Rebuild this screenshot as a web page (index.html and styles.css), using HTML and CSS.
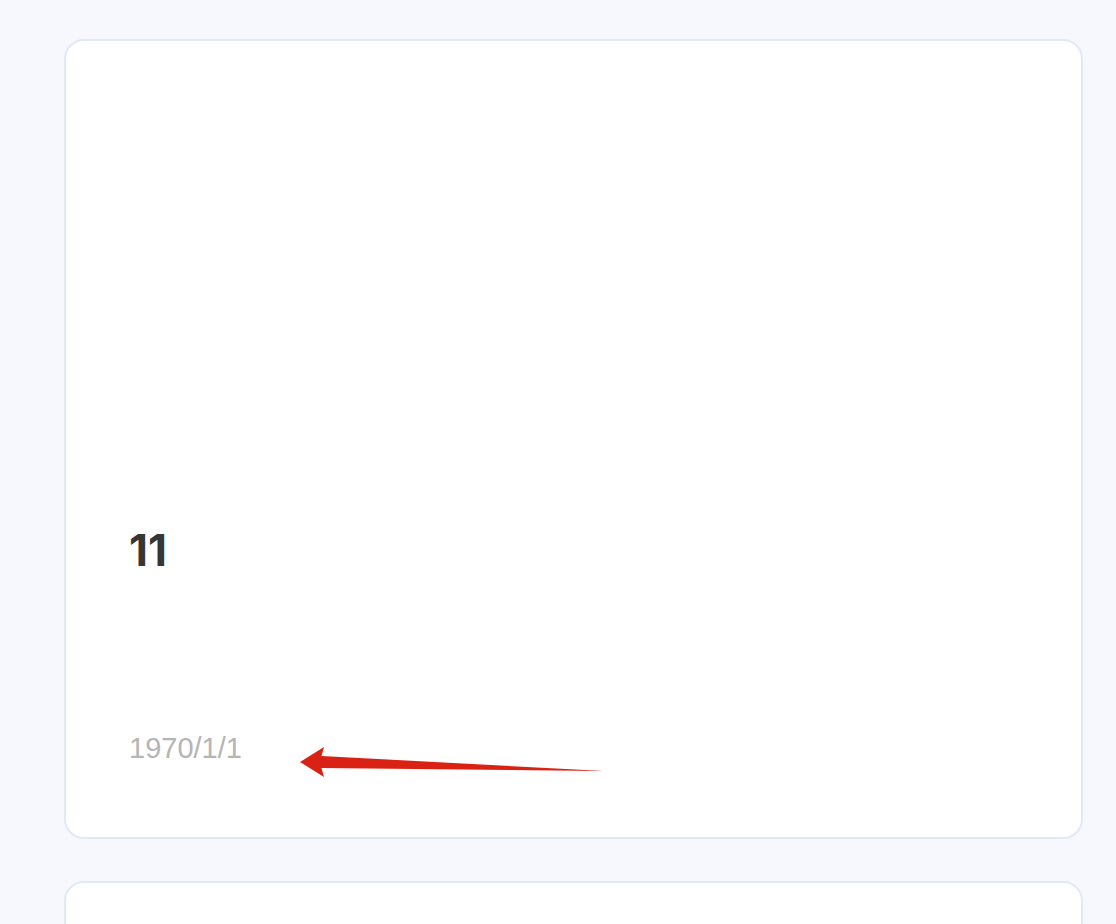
FILE: index.html
```html
<!DOCTYPE html>
<html lang="en">
<head>
  <meta charset="UTF-8" />
  <title>Posts</title>
  <link rel="stylesheet" href="styles.css">
</head>
<body>

  <!-- Post list -->
  <div class="list">
    <div class="card">
      <div class="card-cover"></div>
      <h2 class="card-title">11</h2>
      <div class="card-date">1970/1/1</div>

      <!-- annotation arrow -->
      <svg class="arrow" width="320" height="40" viewBox="0 0 320 40">
        <path d="M0 16 L24 1 L21.5 10 L304 25 L21.5 22 L24 31 Z" fill="#d92214" />
      </svg>
    </div>

    <div class="card"></div>
  </div>

</body>
</html>
```

FILE: styles.css
```css
body {
  margin: 0;
  padding: 0;
  font-family: Inter, 'Noto Sans', sans-serif;
  background-color: #f7f8fe;
  color: #333;
}

.list {
  display: flex;
  flex-direction: column;
  gap: 42px;
  padding: 39px 33px 0 64px;
}

.card {
  position: relative;
  height: 800px;
  box-sizing: border-box;
  background: white;
  border: 2px solid #e3e8f7;
  border-radius: 20px;
  padding: 0 63px;
  display: flex;
  flex-direction: column;
}

.card-cover {
  height: 483px;
  flex-shrink: 0;
}

.card-title {
  margin: 0;
  font-size: 44px;
  line-height: 52px;
  font-weight: 700;
  color: #363636;
}

.card-date {
  margin-top: 155px;
  font-family: 'Liberation Sans', Arial, sans-serif;
  font-size: 29px;
  line-height: 34px;
  color: #b5b5b5;
}

.arrow {
  position: absolute;
  left: 234px;
  top: 705px;
}
```
